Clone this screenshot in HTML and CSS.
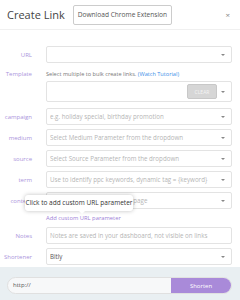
FILE: index.html
```html
<!DOCTYPE html>
<html lang="en">
<head>
  <meta charset="UTF-8" />
  <meta name="viewport" content="width=device-width, initial-scale=1.0"/>
  <title>Create Link</title>
  <link rel="stylesheet" href="styles.css">
</head>
<body>

  <div id="header">
    <h1>Create Link</h1>
    <button class="extBtn">Download Chrome Extension</button>
    <span class="close">&times;</span>
  </div>

  <div id="form">
    <div class="row">
      <label>URL</label>
      <div class="field"><span class="ph"></span><span class="caret"></span></div>
    </div>

    <div class="row help">
      <label>Template</label>
      <p>Select multiple to bulk create links. <a>(Watch Tutorial)</a></p>
    </div>
    <div class="row">
      <span></span>
      <div class="field tall"><span class="ph"></span><span class="clear">CLEAR</span><span class="caret"></span></div>
    </div>

    <div class="row">
      <label>campaign</label>
      <div class="field"><span class="ph">e.g. holiday special, birthday promotion</span><span class="caret"></span></div>
    </div>
    <div class="row">
      <label>medium</label>
      <div class="field"><span class="ph">Select Medium Parameter from the dropdown</span><span class="caret"></span></div>
    </div>
    <div class="row">
      <label>source</label>
      <div class="field"><span class="ph">Select Source Parameter from the dropdown</span><span class="caret"></span></div>
    </div>
    <div class="row">
      <label>term</label>
      <div class="field"><span class="ph">Use to identify ppc keywords, dynamic tag = {keyword}</span><span class="caret"></span></div>
    </div>
    <div class="row tipRow">
      <label>content</label>
      <div class="field"><span class="ph">Use to differentiate ads on a page</span><span class="caret"></span></div>
      <div class="tooltip">Click to add custom URL parameter</div>
    </div>

    <div class="row linkRow">
      <span></span>
      <a>Add custom URL parameter</a>
    </div>

    <div class="row">
      <label>Notes</label>
      <div class="field"><span class="ph">Notes are saved in your dashboard, not visible on links</span></div>
    </div>
    <div class="row">
      <label>Shortener</label>
      <div class="field"><span class="val">Bitly</span><span class="caret"></span></div>
    </div>
  </div>

  <div id="footer">
    <div class="shortBox">
      <span class="url">http://</span>
      <button class="shorten">Shorten</button>
    </div>
  </div>

</body>
</html>
```

FILE: styles.css
```css
body {
  margin: 0;
  padding: 0;
  font-family: 'Open Sans', 'Noto Sans', sans-serif;
  background: white;
  color: #333;
  width: 240px;
  height: 300px;
  overflow: hidden;
}

#header {
  display: flex;
  align-items: center;
  height: 30px;
  padding: 0 8px 0 7px;
  border-bottom: 1px solid #f0f0f0;
  box-sizing: border-box;
}

h1 {
  margin: 0;
  font-size: 11px;
  font-weight: 400;
  color: #444;
}

.extBtn {
  margin-left: 8px;
  height: 20px;
  padding: 0 4px;
  font-family: inherit;
  font-size: 6.6px;
  color: #555;
  background: white;
  border: 1px solid #ccc;
  border-radius: 2px;
}

.close {
  margin-left: auto;
  margin-right: 2px;
  font-size: 8px;
  color: #888;
}

#form {
  padding: 16px 8px 0 0;
}

.row {
  display: grid;
  grid-template-columns: 32px 1fr;
  column-gap: 14px;
  align-items: center;
  margin-bottom: 4px;
  position: relative;
}

label {
  text-align: right;
  font-size: 6px;
  color: #ab94dc;
  white-space: nowrap;
}

.field {
  display: flex;
  align-items: center;
  height: 17px;
  padding: 0 6px 0 3px;
  border: 1px solid #e3e3e3;
  border-radius: 2px;
  box-sizing: border-box;
}

.field.tall {
  height: 21px;
}

.ph, .val {
  flex: 1;
  font-size: 6.2px;
  color: #b5b5b5;
  white-space: nowrap;
  overflow: hidden;
}

.val {
  color: #555;
}

.caret {
  width: 0;
  height: 0;
  border-left: 2px solid transparent;
  border-right: 2px solid transparent;
  border-top: 2px solid #888;
  margin-left: 4px;
}

.clear {
  width: 30px;
  height: 15px;
  line-height: 15px;
  text-align: center;
  font-size: 5px;
  color: #f4f4f4;
  background: #d6d6d6;
  border: 1px solid #c8c8c8;
  border-radius: 2px;
  box-sizing: border-box;
}

.help {
  margin-top: 7px;
  margin-bottom: 3px;
}

.help p {
  margin: 0;
  font-size: 5.6px;
  color: #777;
}

.help a {
  color: #3b8ee8;
}

.help + .row {
  margin-bottom: 6px;
}

.linkRow {
  margin: 5px 0 5px;
}

.linkRow a {
  font-size: 5.8px;
  color: #9b7dd6;
}

.tooltip {
  position: absolute;
  left: 25px;
  top: 3px;
  width: 108px;
  height: 16px;
  line-height: 16px;
  text-align: center;
  white-space: nowrap;
  font-size: 6.5px;
  color: #333;
  background: white;
  border-radius: 3px;
  box-shadow: 0 0 4px rgba(0,0,0,0.25);
}

.tooltip::after {
  content: "";
  position: absolute;
  left: 54px;
  bottom: -3px;
  border-left: 3px solid transparent;
  border-right: 3px solid transparent;
  border-top: 3px solid white;
}

#footer {
  position: absolute;
  left: 0;
  right: 0;
  top: 267px;
  bottom: 0;
  background: #e9eff2;
  padding: 10px 8px 0 7px;
}

.shortBox {
  display: flex;
  height: 17px;
  border: 1px solid #e0e0e0;
  border-radius: 9px;
  background: #f7f8f9;
  overflow: hidden;
  box-sizing: border-box;
}

.url {
  flex: 1;
  padding-left: 5px;
  line-height: 15px;
  font-size: 6px;
  color: #555;
}

.shorten {
  width: 60px;
  border: none;
  background: #a98ad9;
  color: white;
  font-family: inherit;
  font-size: 6px;
}
```
